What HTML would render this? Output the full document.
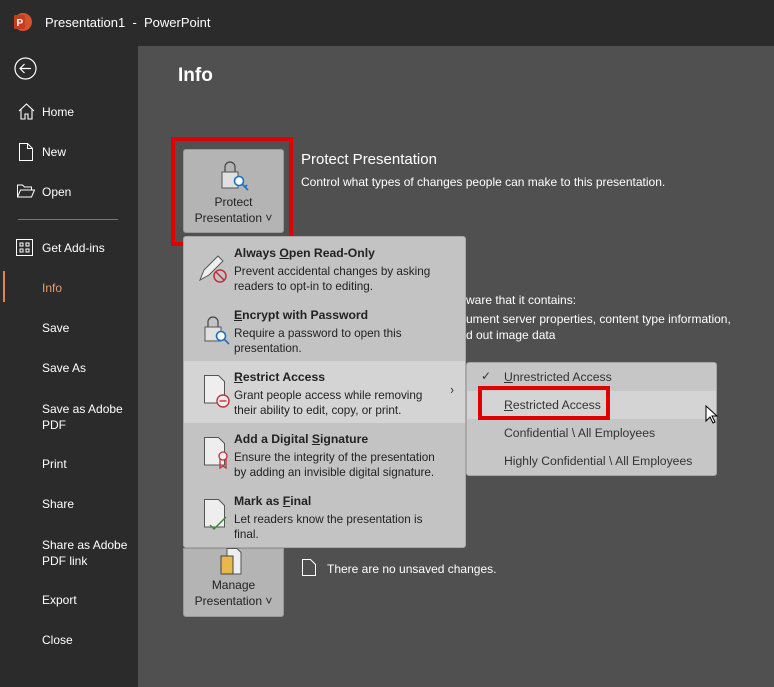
<!DOCTYPE html>
<html><head><style>
*{margin:0;padding:0;box-sizing:border-box}
body{width:774px;height:687px;background:#2b2b2b;font-family:"Segoe UI","Liberation Sans",sans-serif;overflow:hidden;position:relative;color:#fff}
.a{position:absolute;white-space:nowrap}
.side{font-size:12px;color:#fff}
.main{position:absolute;left:138px;top:46px;width:636px;height:641px;background:#505050}
.menu{position:absolute;left:183px;top:236px;width:283px;height:312px;background:#c3c3c3;border:1px solid #a8a8a8;border-radius:3px;color:#222}
.row{position:absolute;left:0;width:281px;height:62px}
.row b{position:absolute;left:50px;top:9px;font-size:12.2px;font-weight:bold}
.row span{position:absolute;left:50px;top:27px;font-size:11.7px;line-height:15px;white-space:nowrap}
.sub{position:absolute;left:466px;top:362px;width:251px;height:114px;background:#c6c6c6;border:1px solid #a8a8a8;border-radius:3px;color:#333;font-size:12.2px}
.sub div{position:absolute;left:0;width:249px;height:28px;padding:7px 0 0 37px}
u{text-decoration:underline}
</style></head><body>
<svg class="a" style="left:13px;top:12px" width="20" height="20" viewBox="0 0 20 20"><circle cx="10" cy="10" r="9" fill="#d35230"/><rect x="1" y="3" width="11" height="14" rx="1.5" fill="#c43e1c"/><text x="3.5" y="14" font-size="10" font-family="Liberation Sans" font-weight="bold" fill="#fff">P</text></svg>
<div class="a" style="left:45px;top:15px;font-size:13px">Presentation1 &nbsp;-&nbsp; PowerPoint</div>
<svg class="a" style="left:14px;top:57px" width="23" height="23" viewBox="0 0 23 23"><circle cx="11.5" cy="11.5" r="10.5" fill="none" stroke="#fff" stroke-width="1.2"/><path d="M6 11.5h11M10.5 7l-4.5 4.5 4.5 4.5" fill="none" stroke="#fff" stroke-width="1.2"/></svg>
<svg class="a" style="left:18px;top:103px" width="17" height="17" viewBox="0 0 17 17"><path d="M1 8L8.5 1 16 8M3 6.5V16h4v-5h3v5h4V6.5" fill="none" stroke="#fff" stroke-width="1.1"/></svg>
<div class="a side" style="left:42px;top:105px">Home</div>
<svg class="a" style="left:19px;top:143px" width="14" height="18" viewBox="0 0 14 18"><path d="M.5.5h8l5 5v12H.5z M8.5.5v5h5" fill="none" stroke="#fff" stroke-width="1"/></svg>
<div class="a side" style="left:42px;top:145px">New</div>
<svg class="a" style="left:17px;top:184px" width="18" height="14" viewBox="0 0 18 14"><path d="M.5 13V1h5l2 2h7v3M.5 13l3-7h14l-3 7z" fill="none" stroke="#fff" stroke-width="1"/></svg>
<div class="a side" style="left:42px;top:185px">Open</div>
<div class="a" style="left:18px;top:219px;width:100px;height:1px;background:#777"></div>
<svg class="a" style="left:16px;top:239px" width="17" height="17" viewBox="0 0 17 17"><rect x=".5" y=".5" width="16" height="16" fill="none" stroke="#fff"/><rect x="4" y="4" width="3" height="3" fill="none" stroke="#fff"/><rect x="10" y="4" width="3" height="3" fill="none" stroke="#fff"/><rect x="4" y="10" width="3" height="3" fill="none" stroke="#fff"/><rect x="10" y="10" width="3" height="3" fill="none" stroke="#fff"/></svg>
<div class="a side" style="left:42px;top:241px">Get Add-ins</div>
<div class="a" style="left:3px;top:271px;width:2px;height:31px;background:#e0815b"></div>
<div class="a side" style="left:42px;top:281px;color:#e89a72">Info</div>
<div class="a side" style="left:42px;top:321px">Save</div>
<div class="a side" style="left:42px;top:361px">Save As</div>
<div class="a side" style="left:42px;top:401px;line-height:16px">Save as Adobe<br>PDF</div>
<div class="a side" style="left:42px;top:457px">Print</div>
<div class="a side" style="left:42px;top:497px">Share</div>
<div class="a side" style="left:42px;top:537px;line-height:16px">Share as Adobe<br>PDF link</div>
<div class="a side" style="left:42px;top:593px">Export</div>
<div class="a side" style="left:42px;top:633px">Close</div>

<div class="main"></div>
<div class="a" style="left:178px;top:65px;font-size:19px;font-weight:bold">Info</div>
<div class="a" style="left:183px;top:149px;width:101px;height:84px;background:#b4b4b4;border:1px solid #999;border-radius:3px"></div>
<svg class="a" style="left:221px;top:160px" width="30" height="32" viewBox="0 0 30 32"><path d="M4 12V7a5 5 0 0 1 10 0v5" fill="none" stroke="#444" stroke-width="1.2"/><rect x="1" y="12" width="16" height="16" fill="#e0e0e0" stroke="#555"/><circle cx="18" cy="21" r="4.5" fill="#fff" stroke="#1e6fc0" stroke-width="1.6"/><path d="M21 24l6 6m-3-3l2-2" stroke="#1e6fc0" stroke-width="1.6"/></svg>
<div class="a" style="left:183px;top:194px;width:101px;text-align:center;color:#222;font-size:12px;line-height:16px">Protect<br>Presentation ˅</div>
<div class="a" style="left:171px;top:137px;width:122px;height:109px;border:4px solid #e00000"></div>
<div class="a" style="left:301px;top:151px;font-size:15px">Protect Presentation</div>
<div class="a" style="left:301px;top:175px;font-size:12px">Control what types of changes people can make to this presentation.</div>
<div class="a" style="left:466px;top:293px;font-size:12px">ware that it contains:</div>
<div class="a" style="left:466px;top:312px;font-size:12px">ument server properties, content type information,</div>
<div class="a" style="left:466px;top:328px;font-size:12px">d out image data</div>

<div class="a" style="left:183px;top:548px;width:101px;height:69px;background:#b4b4b4;border:1px solid #999;border-radius:0 0 3px 3px"></div>
<svg class="a" style="left:218px;top:548px" width="28" height="28" viewBox="0 0 28 28"><path d="M9 .5h10l4 4V26H9z" fill="#eee" stroke="#555"/><rect x="3" y="8" width="12" height="18" fill="#e8b84a" stroke="#444"/></svg>
<div class="a" style="left:183px;top:577px;width:101px;text-align:center;color:#222;font-size:12px;line-height:16px">Manage<br>Presentation ˅</div>
<svg class="a" style="left:302px;top:559px" width="14" height="17" viewBox="0 0 14 17"><path d="M.5.5h8l5 5v11H.5z" fill="none" stroke="#fff"/></svg>
<div class="a" style="left:327px;top:562px;font-size:12px">There are no unsaved changes.</div>

<div class="menu">
<div class="row" style="top:0"><svg class="a" style="left:14px;top:16px" width="34" height="32" viewBox="0 0 34 32"><path d="M2 27l4-10L20 3l5 5L11 22z" fill="#eee" stroke="#555"/><circle cx="22" cy="23" r="6" fill="none" stroke="#c0313a" stroke-width="1.5"/><path d="M18 19l8 8" stroke="#c0313a" stroke-width="1.5"/></svg><b>Always <u>O</u>pen Read-Only</b><span>Prevent accidental changes by asking<br>readers to opt-in to editing.</span></div>
<div class="row" style="top:62px"><svg class="a" style="left:20px;top:16px" width="30" height="32" viewBox="0 0 30 32"><path d="M4 12V7a5 5 0 0 1 10 0v5" fill="none" stroke="#444" stroke-width="1.2"/><rect x="1" y="12" width="16" height="14" fill="#e0e0e0" stroke="#555"/><circle cx="17" cy="21" r="4.5" fill="#fff" stroke="#1e6fc0" stroke-width="1.6"/><path d="M20 24l5 5" stroke="#1e6fc0" stroke-width="1.6"/></svg><b><u>E</u>ncrypt with Password</b><span>Require a password to open this<br>presentation.</span></div>
<div class="row" style="top:124px;background:#d4d4d4"><svg class="a" style="left:20px;top:14px" width="30" height="34" viewBox="0 0 30 34"><path d="M.5.5h14l6 6V28H.5z" fill="#eee" stroke="#555"/><circle cx="19" cy="26" r="6" fill="#eee" stroke="#c0313a" stroke-width="1.4"/><path d="M15.5 26h7" stroke="#c0313a" stroke-width="1.4"/></svg><b><u>R</u>estrict Access</b><span>Grant people access while removing<br>their ability to edit, copy, or print.</span><div class="a" style="left:266px;top:21px;font-size:13px;transform:scaleX(.8)">›</div></div>
<div class="row" style="top:186px"><svg class="a" style="left:20px;top:14px" width="30" height="34" viewBox="0 0 30 34"><path d="M.5.5h14l6 6V28H.5z" fill="#eee" stroke="#555"/><circle cx="19" cy="19" r="4" fill="#eee" stroke="#c0313a" stroke-width="1.3"/><path d="M16 22v9l3-2 3 2v-9" fill="none" stroke="#c0313a" stroke-width="1.3"/></svg><b>Add a Digital <u>S</u>ignature</b><span>Ensure the integrity of the presentation<br>by adding an invisible digital signature.</span></div>
<div class="row" style="top:248px"><svg class="a" style="left:20px;top:14px" width="30" height="34" viewBox="0 0 30 34"><path d="M.5.5h14l6 6V28H.5z" fill="#eee" stroke="#555"/><path d="M6 26l4 4 12-12" fill="none" stroke="#3a8a3a" stroke-width="1.5"/></svg><b>Mark as <u>F</u>inal</b><span>Let readers know the presentation is<br>final.</span></div>
</div>

<div class="sub">
<div style="top:0"><span class="a" style="left:14px;top:6px">✓</span><u>U</u>nrestricted Access</div>
<div style="top:28px;background:#d4d4d4"><u>R</u>estricted Access</div>
<div style="top:56px">Confidential \ All Employees</div>
<div style="top:84px">Highly Confidential \ All Employees</div>
</div>
<div class="a" style="left:478px;top:386px;width:132px;height:34px;border:4px solid #e00000"></div>
<svg class="a" style="left:705px;top:405px" width="14" height="20" viewBox="0 0 14 20"><path d="M1 1v15l4-4 3 6 2-1-3-6h5z" fill="#fff" stroke="#000"/></svg>
</body></html>
